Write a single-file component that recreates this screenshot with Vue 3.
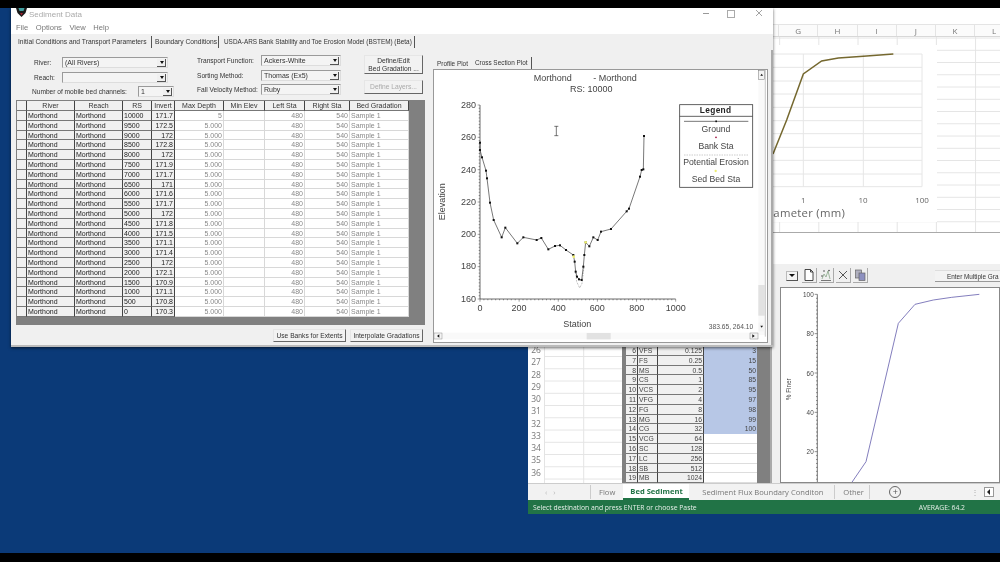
<script setup>
const rs = [['10000','171.7'],['9500','172.5'],['9000','172'],['8500','172.8'],['8000','172'],['7500','171.9'],['7000','171.7'],['6500','171'],['6000','171.6'],['5500','171.7'],['5000','172'],['4500','171.8'],['4000','171.5'],['3500','171.1'],['3000','171.4'],['2500','172'],['2000','172.1'],['1500','170.9'],['1000','171.1'],['500','170.8'],['0','170.3']]
const heads = ['', 'River', 'Reach', 'RS', 'Invert', 'Max Depth', 'Min Elev', 'Left Sta', 'Right Sta', 'Bed Gradation']
const grad = [[6,'VFS','0.125','3'],[7,'FS','0.25','15'],[8,'MS','0.5','50'],[9,'CS','1','85'],[10,'VCS','2','95'],[11,'VFG','4','97'],[12,'FG','8','98'],[13,'MG','16','99'],[14,'CG','32','100'],[15,'VCG','64',''],[16,'SC','128',''],[17,'LC','256',''],[18,'SB','512',''],[19,'MB','1024','']]
const letters = ['A','B','C','D','E','F','G','H','I','J','K','L']
const rowNums = [26,27,28,29,30,31,32,33,34,35,36]
const ground = [[150,278],[150,300],[156,322],[168,362],[171,385],[180,458],[191,510],[215,562],[226,533],[262,580],[280,562],[320,570],[334,564],[355,598],[375,588],[390,586],[408,600],[430,615],[434,635],[437,665],[441,680],[447,688],[455,690],[460,650],[463,615],[467,577],[478,589],[490,562],[503,570],[513,545],[543,537],[590,484],[597,476],[630,380],[635,360],[640,358],[642,258]]
const groundLine = ground.map(p => p.join(',')).join(' ')
const yTicks = Array.from({ length: 61 }, (_, i) => ({ y: 165 + i * 9.7, major: i % 10 === 0 }))
const xTicks = Array.from({ length: 51 }, (_, i) => ({ x: 150 + i * 11.74, major: i % 10 === 0 }))
const yLabels = [[280,174],[260,271],[240,368],[220,464],[200,561],[180,658],[160,756]]
const xLabels = [[0,150],[200,267],[400,385],[600,502],[800,620],[1000,737]]
const gTicks = Array.from({ length: 49 }, (_, i) => ({ y: 118 + i * 11.8, major: i % 10 === 0 }))
const gLabels = [[100,127],[80,244],[60,362],[40,481],[20,598]]
const chartV = [310,490]
const chartH = [162,202,243,282,322,362,401,442,481,522,560]
</script>

<template>
  <div class="screen">
    <div class="blackbar top"></div>

    <!-- Excel window behind -->
    <section class="excel">
      <div class="x-ribbon"></div>
      <div class="x-cols">
        <span v-for="l in letters" :key="l">{{ l }}</span>
      </div>
      <div class="sheet">
        <div class="rownums"><span v-for="n in rowNums" :key="n">{{ n }}</span></div>

        <svg class="xl-chart" viewBox="219 135 492 531">
          <rect x="219" y="135" width="492" height="531" fill="#fff" />
          <line v-for="y in chartH" :key="y" x1="219" x2="666" :y1="y" :y2="y" stroke="#e6e6e6" stroke-width="3" />
          <line v-for="x in chartV" :key="x" :x1="x" :x2="x" y1="162" y2="560" stroke="#e6e6e6" stroke-width="3" />
          <line x1="666" x2="666" y1="162" y2="560" stroke="#e6e6e6" stroke-width="3" />
          <polyline points="219,462 260,360 310,222 365,183 415,174 490,169 580,162" fill="none" stroke="#75682f" stroke-width="4.5" />
          <text x="310" y="608" class="xl-t" text-anchor="middle">1</text>
          <text x="489" y="608" class="xl-t" text-anchor="middle">10</text>
          <text x="666" y="608" class="xl-t" text-anchor="middle">100</text>
          <text x="220" y="650" class="xl-a">ameter (mm)</text>
        </svg>

        <!-- Bed gradation window -->
        <div class="gwin">
          <div class="g-title"></div>
          <div class="g-tools">
            <span class="drop"></span>
            <span class="tool">
              <svg viewBox="0 0 14 14" width="14" height="14"><path d="M3 1.5h5.5L11 4v8.5H3z M8.5 1.5V4H11" fill="#fff" stroke="#333" stroke-width=".9" /></svg>
            </span>
            <span class="tool">
              <svg viewBox="0 0 14 14" width="14" height="14"><path d="M2 12.5h10" stroke="#777" /><path d="M3 11l2-5 2 3 2-6 2 8" fill="none" stroke="#8aa88a" stroke-width=".8" /><circle cx="5" cy="3" r=".8" fill="#444" /><circle cx="10" cy="2.5" r=".8" fill="#444" /><circle cx="3" cy="8" r=".8" fill="#444" /></svg>
            </span>
            <span class="tool">
              <svg viewBox="0 0 14 14" width="14" height="14"><path d="M3 3l8 8M11 3l-8 8" stroke="#444" stroke-width=".9" /></svg>
            </span>
            <span class="tool">
              <svg viewBox="0 0 14 14" width="14" height="14"><rect x="2.5" y="2" width="6" height="8" fill="#b0b0c0" stroke="#666" stroke-width=".7" /><rect x="6" y="5" width="6" height="7.5" fill="#8d90c0" stroke="#666" stroke-width=".7" /></svg>
            </span>
            <span class="multi">Enter Multiple Gra</span>
          </div>
          <div class="g-body">
            <div class="g-table">
              <div v-for="r in grad" :key="r[0]" class="g-row">
                <span class="g-n">{{ r[0] }}</span>
                <span class="g-c">{{ r[1] }}</span>
                <span class="g-v">{{ r[2] }}</span>
                <span class="g-p" :class="{ hi: r[3] }">{{ r[3] }}</span>
              </div>
            </div>
            <svg class="g-plot" viewBox="30 96 660 588">
              <line x1="142" x2="142" y1="118" y2="687" stroke="#333" stroke-width="2" />
              <line v-for="t in gTicks" :key="t.y" :x1="t.major ? 134 : 138" x2="142" :y1="t.y" :y2="t.y" stroke="#333" stroke-width="1.6" />
              <text v-for="l in gLabels" :key="l[0]" x="131" :y="l[1]" class="g-t" text-anchor="end">{{ l[0] }}</text>
              <text x="64" y="403" class="g-t" text-anchor="middle" transform="rotate(-90 64 403)">% Finer</text>
              <polyline points="245,683 288,620 385,205 435,148 490,135 545,127 628,118" fill="none" stroke="#6a64b0" stroke-width="2.5" />
            </svg>
          </div>
        </div>
      </div>
      <div class="x-tabs">
        <span class="arrows">‹ &nbsp; ›</span>
        <span class="x-tab">Flow</span>
        <span class="x-tab active">Bed Sediment</span>
        <span class="x-tab flux">Sediment Flux Boundary Conditon</span>
        <span class="x-tab other">Other</span>
        <span class="plus">+</span>
        <span class="dots">⋮</span>
        <span class="sbtn"></span>
      </div>
      <div class="x-status">
        <span>Select destination and press ENTER or choose Paste</span>
        <span class="avg">AVERAGE: 64.2</span>
      </div>
    </section>

    <!-- Sediment Data window -->
    <section class="main">
      <div class="titlebar">
        <svg class="logo" viewBox="0 0 11 9" width="11" height="9">
          <path d="M0 0h11L9.5 5 5.5 9 1.5 5z" fill="#1a1a1a" />
          <path d="M2.5 0h6L7.5 3h-4z" fill="#3f9ea0" />
          <path d="M4 5h3L5.5 7.5z" fill="#a02030" />
        </svg>
        <span class="t-name">Sediment Data</span>
        <span class="ctl min"></span>
        <span class="ctl max"></span>
        <svg class="ctl close" viewBox="0 0 8 8" width="8" height="8"><path d="M1 1l6 6M7 1L1 7" stroke="#999" stroke-width=".9" /></svg>
      </div>
      <div class="menu"><span>File</span><span>Options</span><span>View</span><span>Help</span></div>

      <div class="tabs">
        <span class="tab t1">Initial Conditions and Transport Parameters</span>
        <span class="tab t2">Boundary Conditions</span>
        <span class="tab t3">USDA-ARS Bank Stability and Toe Erosion Model (BSTEM) (Beta)</span>
      </div>

      <div class="body">
        <div class="left">
          <div class="form">
            <div class="f1">
              <div class="fr"><label class="l-river">River:</label><span class="sel w-river">(All Rivers)</span></div>
              <div class="fr"><label class="l-river">Reach:</label><span class="sel w-river"></span></div>
              <div class="fr"><label class="l-num">Number of mobile bed channels:</label><span class="sel w-num">1</span></div>
            </div>
            <div class="f2">
              <div class="fr"><label class="l-tr">Transport Function:</label><span class="sel w-tr">Ackers-White</span></div>
              <div class="fr"><label class="l-tr">Sorting Method:</label><span class="sel w-tr">Thomas (Ex5)</span></div>
              <div class="fr"><label class="l-tr">Fall Velocity Method:</label><span class="sel w-tr">Ruby</span></div>
            </div>
            <div class="f3">
              <button class="btn b-def">Define/Edit<br />Bed Gradation ...</button>
              <button class="btn b-lay">Define Layers...</button>
            </div>
          </div>

          <div class="grid">
            <div class="g-line head"><span v-for="(h, i) in heads" :key="i">{{ h }}</span></div>
            <div v-for="(r, i) in rs" :key="r[0]" class="g-line">
              <span class="c0"></span>
              <span class="lock">Morthond</span>
              <span class="lock">Morthond</span>
              <span class="lock">{{ r[0] }}</span>
              <span class="lock num">{{ r[1] }}</span>
              <span class="ed num">{{ i === 0 ? '5' : '5.000' }}</span>
              <span class="ed"></span>
              <span class="ed num">480</span>
              <span class="ed num">540</span>
              <span class="ed">Sample 1</span>
            </div>
          </div>

          <div class="bottom">
            <button class="btn b-b1">Use Banks for Extents</button>
            <button class="btn b-b2">Interpolate Gradations</button>
          </div>
        </div>

        <div class="right">
          <div class="p-tabs"><span>Profile Plot</span><span class="on">Cross Section Plot</span></div>
          <svg class="plot" viewBox="9 57 1005 822">
            <g class="pt">
              <text x="368" y="93" text-anchor="middle">Morthond</text>
              <text x="555" y="93" text-anchor="middle">- Morthond</text>
              <text x="484" y="125" text-anchor="middle">RS: 10000</text>
              <text v-for="l in yLabels" :key="l[0]" x="138" :y="l[1]" text-anchor="end">{{ l[0] }}</text>
              <text v-for="l in xLabels" :key="l[0]" :x="l[1]" y="783" text-anchor="middle">{{ l[0] }}</text>
              <text x="442" y="830" text-anchor="middle">Station</text>
              <text x="45" y="455" text-anchor="middle" transform="rotate(-90 45 455)">Elevation</text>
            </g>
            <line x1="150" x2="150" y1="165" y2="747" stroke="#222" stroke-width="2" />
            <line x1="150" x2="737" y1="747" y2="747" stroke="#222" stroke-width="2" />
            <line v-for="t in yTicks" :key="t.y" :x1="t.major ? 143 : 146" x2="150" :y1="t.y" :y2="t.y" stroke="#222" stroke-width="1.3" />
            <line v-for="t in xTicks" :key="t.x" :x1="t.x" :x2="t.x" y1="747" :y2="t.major ? 755 : 751" stroke="#222" stroke-width="1.3" />
            <polyline points="437,665 440,695 449,714 456,700 462,650" fill="none" stroke="#333" stroke-width="1.5" stroke-dasharray="2 3" />
            <polyline :points="groundLine" fill="none" stroke="#333" stroke-width="2" />
            <rect v-for="(p, i) in ground" :key="i" :x="p[0] - 3" :y="p[1] - 3" width="6" height="6" fill="#111" />
            <circle cx="431" cy="620" r="4" fill="#eded70" />
            <circle cx="467" cy="577" r="4" fill="#eded70" />

            <!-- legend -->
            <rect x="749" y="164" width="219" height="248" fill="#fff" stroke="#444" stroke-width="2.5" />
            <line x1="749" x2="968" y1="199" y2="199" stroke="#444" stroke-width="2.5" />
            <text x="857" y="188" class="leg-h" text-anchor="middle">Legend</text>
            <line x1="762" x2="955" y1="214" y2="214" stroke="#333" stroke-width="2" />
            <rect x="856" y="211.5" width="5" height="5" fill="#111" />
            <text x="858" y="245" class="leg" text-anchor="middle">Ground</text>
            <circle cx="858" cy="262" r="2.6" fill="#a01040" />
            <text x="858" y="296" class="leg" text-anchor="middle">Bank Sta</text>
            <line x1="762" x2="955" y1="315" y2="315" stroke="#666" stroke-width="1.5" stroke-dasharray="2 3" />
            <text x="858" y="346" class="leg" text-anchor="middle">Potential Erosion</text>
            <circle cx="857" cy="363" r="3.5" fill="#eded70" />
            <text x="858" y="396" class="leg" text-anchor="middle">Sed Bed Sta</text>

            <path d="M373 229h12M373 257h12M379 229v28" stroke="#333" stroke-width="2" fill="none" />
            <text x="903" y="838" class="coords" text-anchor="middle">383.65, 264.10</text>

            <!-- scrollbars -->
            <rect x="985" y="60" width="20" height="795" fill="#f9f9f9" />
            <line x1="1006" x2="1006" y1="60" y2="860" stroke="#aaa" stroke-width="2" />
            <rect x="985" y="705" width="20" height="92" fill="#e2e2e2" />
            <rect x="986" y="62" width="18" height="26" fill="#f4f4f4" stroke="#777" stroke-width="1.5" />
            <path d="M991 77l4-6 4 6z" fill="#111" />
            <rect x="986" y="818" width="18" height="26" fill="#f4f4f4" />
            <path d="M991 827l4 6 4-6z" fill="#111" />
            <rect x="10" y="848" width="975" height="20" fill="#f9f9f9" />
            <rect x="470" y="849" width="72" height="19" fill="#e2e2e2" />
            <rect x="12" y="849" width="24" height="18" fill="#f4f4f4" stroke="#777" stroke-width="1.2" />
            <path d="M28 853l-7 5 7 5z" fill="#111" />
            <rect x="960" y="849" width="24" height="18" fill="#f4f4f4" stroke="#777" stroke-width="1.2" />
            <path d="M967 853l7 5-7 5z" fill="#111" />
          </svg>
        </div>
      </div>
    </section>

    <div class="blackbar bot"></div>
  </div>
</template>

<style>
html, body { margin: 0; background: #0b3a78; }
</style>

<style scoped>
.screen {
  position: relative;
  width: 1000px;
  height: 562px;
  overflow: hidden;
  background: #0b3a78;
  font-family: "Liberation Sans", Arial, sans-serif;
  font-size: 7px;
  color: #333;
  filter: blur(0.45px);
}
.blackbar { position: absolute; left: 0; width: 1000px; background: #000; }
.blackbar.top { top: 0; height: 8px; z-index: 5; }
.blackbar.bot { bottom: 0; height: 9px; }

/* excel */
.excel {
  position: absolute;
  left: 528px;
  top: 8px;
  width: 472px;
  height: 506px;
  display: flex;
  flex-direction: column;
  background: #fff;
}
.x-ribbon { height: 10px; border-bottom: 1px solid #e4e4e4; flex: none; box-sizing: content-box; padding-bottom: 6px; background: #fff; }
.x-cols {
  height: 12px;
  flex: none;
  display: flex;
  padding-left: 16px;
  background: #fbfbfb;
  border-bottom: 1px solid #d8d8d8;
  box-sizing: border-box;
  font-size: 8px;
  color: #777;
  font-family: "Open Sans", sans-serif;
}
.x-cols span { flex: 0 0 39.2px; text-align: center; line-height: 12px; border-right: 1px solid #e4e4e4; box-sizing: border-box; }
.sheet {
  position: relative;
  flex: 1;
  overflow: hidden;
  background-color: #fff;
  background-image:
    linear-gradient(to right, transparent 38.2px, #e4e4e4 38.2px),
    linear-gradient(to bottom, transparent 11.25px, #e4e4e4 11.25px);
  background-size: 39.2px 12.25px;
  background-position: 17px 1.5px;
}
.rownums {
  width: 16px;
  padding-top: 307px;
  background: #fff;
  display: flex;
  flex-direction: column;
  font-family: "Open Sans", sans-serif;
  font-size: 8.5px;
  color: #777;
  height: 100%;
  box-sizing: border-box;
}
.rownums span { flex: 0 0 12.25px; line-height: 12.25px; text-align: center; }
.xl-chart { position: absolute; left: 245px; top: 8px; width: 164px; height: 177px; }
.xl-t { font-family: "Open Sans", sans-serif; font-size: 24px; fill: #666; }
.xl-a { font-family: "Open Sans", sans-serif; font-size: 34px; letter-spacing: .8px; fill: #666; }

.gwin {
  position: absolute;
  left: 94px;
  top: 195px;
  width: 378px;
  height: 251px;
  display: flex;
  flex-direction: column;
  background: #f0f0f0;
  border-top: 1px solid #aaa;
  box-sizing: border-box;
}
.g-title { height: 31px; background: #fff; flex: none; }
.g-tools {
  height: 23px;
  flex: none;
  display: flex;
  align-items: center;
  padding-left: 164px;
}
.drop {
  position: relative;
  width: 10px;
  height: 8px;
  border: 1px solid #bbb;
  border-right-color: #555;
  border-bottom-color: #555;
  background: #f4f4f4;
  margin-right: 4px;
  flex: none;
}
.drop::after {
  content: "";
  position: absolute;
  left: 2px;
  top: 2px;
  width: 0;
  height: 0;
  border-style: solid;
  border-width: 3px 3px 0;
  border-color: #111 transparent transparent;
}
.tool {
  width: 14px;
  height: 14px;
  margin-right: 2px;
  display: flex;
  border-right: 1px solid #aaa;
  border-bottom: 1px solid #aaa;
  flex: none;
}
.multi {
  margin-left: auto;
  width: 65px;
  flex: none;
  height: 12px;
  line-height: 11px;
  padding-left: 12px;
  box-sizing: border-box;
  background: #f3f3f3;
  border-bottom: 1px solid #999;
  border-top: 1px solid #ddd;
  font-size: 6.4px;
  white-space: nowrap;
  color: #333;
}
.g-body { flex: 1; display: flex; min-height: 0; }
.g-table {
  width: 150px;
  flex: none;
  background: #808080;
  padding-top: 59px;
  padding-left: 4px;
  box-sizing: border-box;
  overflow: hidden;
  border-right: 2px solid #aaa;
}
.g-row { display: grid; grid-template-columns: 12px 20px 46px 53px; height: 9.8px; font-size: 6.8px; line-height: 9px; }
.g-row span { background: #f0f0f0; border-right: 1px solid #444; border-bottom: 1px solid #777; box-sizing: border-box; padding: 0 1px; color: #444; overflow: hidden; }
.g-n, .g-v { text-align: right; }
.g-row .g-p { background: #fff; text-align: right; border-right: 0; border-bottom: 1px solid #ddd; }
.g-row .g-p.hi { background: #b7c7e6; border-bottom-color: #b7c7e6; }
.g-plot { margin-left: 8px; width: 220px; height: 196px; background: #fff; outline: 1px solid #888; outline-offset: -1px; flex: none; }
.g-t { font-size: 19px; fill: #444; }

.x-tabs {
  height: 17px;
  flex: none;
  display: flex;
  align-items: center;
  background: #f2f2f2;
  border-top: 1px solid #ccc;
  box-sizing: border-box;
  font-family: "Open Sans", sans-serif;
  font-size: 7.6px;
  color: #777;
  position: relative;
}
.arrows { margin-left: 17px; width: 45px; color: #bbb; flex: none; }
.x-tab { padding: 0 8px; height: 14px; line-height: 14px; flex: none; border-left: 1px solid #ccc; box-sizing: border-box; }
.x-tab.active { padding: 0 0 0 7px; width: 66px; color: #217346; font-weight: 700; background: #fff; border-left: 0; border-bottom: 2px solid #217346; height: 16px; white-space: nowrap; }
.x-tab.flux { border-left: 0; padding: 0 0 0 13px; width: 145px; white-space: nowrap; }
.x-tab.other { padding: 0 0 0 8px; width: 36px; border-right: 1px solid #ccc; }
.plus { margin-left: 19px; width: 10px; height: 10px; line-height: 9px; text-align: center; border: 1px solid #666; border-radius: 50%; color: #555; font-size: 9px; flex: none; box-sizing: content-box; }
.dots { margin-left: 70px; color: #aaa; flex: none; }
.sbtn { position: relative; margin-left: 5px; width: 8px; height: 8px; border: 1px solid #999; background: #fff; flex: none; }
.sbtn::after {
  content: "";
  position: absolute;
  left: 2px;
  top: 1px;
  width: 0;
  height: 0;
  border-style: solid;
  border-width: 3px 3px 3px 0;
  border-color: transparent #222 transparent transparent;
}
.x-status {
  height: 14px;
  flex: none;
  display: flex;
  justify-content: space-between;
  align-items: center;
  background: #217346;
  color: #e6efe9;
  font-family: "Open Sans", sans-serif;
  font-size: 6.8px;
  padding: 0 35px 0 5px;
}

/* main window */
.main {
  position: absolute;
  left: 11px;
  top: 8px;
  width: 762px;
  height: 339px;
  display: flex;
  flex-direction: column;
  background: #f0f0f0;
  box-shadow: 0 1px 3px rgba(0, 0, 0, .6);
  border-bottom: 2px solid #bbb;
  box-sizing: border-box;
}
.main::before {
  content: "";
  position: absolute;
  left: 0;
  top: 0;
  width: 500px;
  height: 5px;
  background: linear-gradient(to bottom, #c4c4c4, rgba(255, 255, 255, 0));
}
.titlebar { position: relative; height: 13px; background: #fff; display: flex; align-items: center; flex: none; }
.logo { margin-left: 5px; margin-top: -4px; flex: none; }
.t-name { margin-left: 2px; font-size: 8px; color: #aaa; }
.ctl { position: absolute; }
.min { left: 692px; top: 5px; width: 6px; height: 1px; background: #999; }
.max { left: 716px; top: 2px; width: 6px; height: 6px; border: 1px solid #aaa; }
.close { left: 744px; top: 1px; }
.menu { height: 13px; background: #fff; display: flex; align-items: center; padding-left: 5px; font-size: 7.6px; color: #777; flex: none; }
.menu span { margin-right: 7.5px; }
.tabs { height: 16px; display: flex; align-items: center; flex: none; position: relative; }
.tab { white-space: nowrap; color: #333; flex: none; border-right: 1px solid #555; height: 12px; line-height: 12px; box-sizing: border-box; }
.t1 { margin-left: 7px; width: 134px; font-size: 6.7px; }
.t2 { margin-left: 3px; width: 64px; font-size: 6.7px; }
.t3 { margin-left: 5px; width: 191px; font-size: 6.4px; }

.body { flex: 1; display: flex; min-height: 0; position: relative; }
.left { width: 417px; padding: 0 3px 0 5px; box-sizing: border-box; flex: none; }
.right { margin-left: 4px; padding-top: 7px; width: 341px; box-sizing: border-box; border-right: 2px solid #aaa; }
.form { height: 50px; display: flex; padding-left: 16px; font-size: 6.6px; }
.f1 { width: 146px; padding-top: 7px; display: flex; flex-direction: column; gap: 3.5px; }
.f2 { width: 144px; margin-left: 19px; padding-top: 5px; display: flex; flex-direction: column; gap: 3.5px; }
.f3 { width: 59px; margin-left: 23px; padding-top: 5px; display: flex; flex-direction: column; gap: 6px; }
.fr { display: flex; align-items: center; height: 11px; }
.fr label { white-space: nowrap; flex: none; }
.l-river { width: 30px; padding-left: 2px; box-sizing: border-box; }
.l-num { width: 106px; }
.l-tr { width: 64px; }
.sel {
  position: relative;
  height: 11px;
  line-height: 9px;
  padding-left: 2px;
  box-sizing: border-box;
  background: #f4f4f4;
  border: 1px solid #9a9a9a;
  border-right-color: #ddd;
  border-bottom-color: #ddd;
  white-space: nowrap;
  font-size: 7px;
}
.sel::after {
  content: "";
  position: absolute;
  right: 1px;
  top: 1px;
  width: 9px;
  height: 8px;
  background: #f0f0f0;
  border-right: 1px solid #555;
  border-bottom: 1px solid #555;
  box-sizing: border-box;
}
.sel::before {
  content: "";
  position: absolute;
  right: 3px;
  top: 3px;
  z-index: 1;
  width: 0;
  height: 0;
  border-style: solid;
  border-width: 3px 2.5px 0;
  border-color: #111 transparent transparent;
}
.w-river { width: 106px; }
.w-num { width: 36px; }
.w-tr { width: 80px; }
.btn {
  font: inherit;
  font-size: 6.7px;
  line-height: 8px;
  color: #333;
  padding: 0;
  background: #f2f2f2;
  border: 1px solid #e6e6e6;
  border-right-color: #666;
  border-bottom-color: #666;
  box-sizing: border-box;
}
.b-def { height: 19px; }
.b-lay { height: 14px; color: #aaa; }

.grid { height: 225px; background: #808080; padding: 1px 16px 0 1px; box-sizing: border-box; }
.g-line { display: grid; grid-template-columns: 10px 48px 48px 29px 23px 49px 41px 40px 45px 59px; height: 9.8px; line-height: 9px; }
.g-line span { box-sizing: border-box; padding: 0 1px; overflow: hidden; white-space: nowrap; }
.head { height: 10px; }
.head span { background: #f0f0f0; text-align: center; border-right: 1px solid #444; border-bottom: 1px solid #777; color: #333; }
.c0 { background: #f0f0f0; border-right: 1px solid #444; border-bottom: 1px solid #777; }
.lock { background: #f0f0f0; border-right: 1px solid #444; border-bottom: 1px solid #777; color: #222; }
.ed { background: #fff; border-right: 1px solid #d8d8d8; border-bottom: 1px solid #d8d8d8; color: #888; }
.num { text-align: right; }
.bottom { display: flex; justify-content: flex-end; gap: 4px; padding: 4px 2px 0 0; }
.b-b1, .b-b2 { width: 73px; height: 13px; }

.p-tabs { height: 12px; display: flex; align-items: center; padding-left: 5px; font-size: 6.4px; }
.p-tabs span { margin-right: 7px; white-space: nowrap; }
.p-tabs .on { height: 12px; line-height: 12px; border-right: 1px solid #555; padding-right: 4px; margin-left: 0; }
.plot { display: block; margin-left: 1px; width: 335px; height: 274px; background: #fff; outline: 1px solid #999; outline-offset: -1px; }
.pt text { font-size: 27px; fill: #444; }
.leg { font-size: 26px; fill: #444; }
.leg-h { font-size: 25px; font-weight: 700; fill: #222; letter-spacing: 1px; }
.coords { font-size: 20px; fill: #555; }
</style>
